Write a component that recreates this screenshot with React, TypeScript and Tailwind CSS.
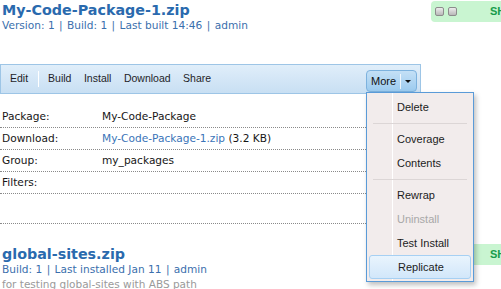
import React from "react";

const lucida = "font-['DejaVu_Sans',sans-serif]";
const helv = "font-['Liberation_Sans',Arial,sans-serif]";

type MenuEntry = { label: string; disabled?: boolean; active?: boolean } | "sep";

const menuItems: MenuEntry[] = [
  { label: "Delete" },
  "sep",
  { label: "Coverage" },
  { label: "Contents" },
  "sep",
  { label: "Rewrap" },
  { label: "Uninstall", disabled: true },
  { label: "Test Install" },
  { label: "Replicate", active: true },
];

const StatusBox = () => (
  <div className="ml-auto -mr-[12px] flex h-[21px] w-[82px] shrink-0 items-center rounded-[4px] bg-[#c9f5d1] pl-[4px]">
    <span className="h-[9px] w-[9px] rounded-[2px] border border-[#8c8c8c] bg-gradient-to-b from-[#ececec] to-[#b9b9b9]" />
    <span className="ml-[4px] h-[9px] w-[9px] rounded-[2px] border border-[#8c8c8c] bg-gradient-to-b from-[#ececec] to-[#b9b9b9]" />
    <span className={`${helv} ml-[33px] text-[11px] font-bold text-[#179c4c]`}>SH</span>
  </div>
);

const Sep = () => <span className="mx-[1px]">|</span>;

const MoreMenu = () => (
  <div className={`${helv} absolute left-0 top-full z-10 w-[108px] border border-[#5a9bd8] bg-[#f2ecec] pb-[2px] pt-[2px] text-[11px] shadow-[2px_3px_5px_rgba(0,0,0,0.25)]`}>
    <div className="absolute bottom-0 left-[25px] top-0 w-[1px] bg-white" />
    {menuItems.map((m, i) =>
      m === "sep" ? (
        <div key={i} className="relative flex h-[8px] items-center px-[6px]">
          <div className="h-[1px] w-full bg-[#dcd6d6]" />
        </div>
      ) : (
        <div
          key={i}
          className={
            "relative mx-[2px] flex h-[24px] items-center rounded-[3px] pl-[28px] " +
            (m.active
              ? "border border-[#a6d0f3] bg-gradient-to-b from-[#e9f4fd] to-[#d2e7fa] pl-[27px]"
              : "") +
            (m.disabled ? " text-[#a8a8a8]" : " text-[#1c1c1c]")
          }
        >
          {m.label}
        </div>
      )
    )}
  </div>
);

const Toolbar = () => (
  <div className={`${helv} mt-[32px] flex h-[30px] w-[421px] items-center border border-[#9dc5e6] bg-gradient-to-b from-[#e0eefa] to-[#c8dff3] pl-[9px] pr-[3px] text-[10.5px] text-[#1e1e28]`}>
    <span>Edit</span>
    <span className="ml-[10px] mr-[9px] h-[16px] w-[1px] bg-white" />
    <div className="flex gap-[12.5px]">
      <span>Build</span>
      <span>Install</span>
      <span>Download</span>
      <span>Share</span>
    </div>
    <div className="relative ml-auto mb-[1px] self-end">
      <div className="flex h-[22px] w-[51px] items-center rounded-[4px] border border-[#7db2de] bg-gradient-to-b from-[#c4e0f6] to-[#9ccbef] text-[11px] text-[#111]">
        <span className="pl-[4px]">More</span>
        <span className="ml-[4px] h-[15px] w-[1px] bg-white/80" />
        <span className="ml-[4px] h-0 w-0 border-l-[3px] border-r-[3px] border-t-[3px] border-l-transparent border-r-transparent border-t-[#111]" />
      </div>
      <MoreMenu />
    </div>
  </div>
);

const rows: { label: string; value: React.ReactNode }[] = [
  { label: "Package:", value: "My-Code-Package" },
  {
    label: "Download:",
    value: (
      <>
        <span className="text-[#3a74b8]">My-Code-Package-1.zip</span> (3.2 KB)
      </>
    ),
  },
  { label: "Group:", value: "my_packages" },
  { label: "Filters:", value: "" },
];

export default function App() {
  return (
    <div className={`${lucida} relative h-[289px] w-[501px] overflow-hidden bg-white`}>
      <div className="w-[472px] border-b border-dotted border-[#8a8a8a] pb-[29px] pt-[1px]">
        <div className="flex w-[501px] items-start">
          <div className="pl-[2px] pt-[1px]">
            <div className="text-[14.3px] font-bold leading-[17px] text-[#2a6aae]">My-Code-Package-1.zip</div>
            <div className="text-[10.6px] leading-[13px] text-[#3b6fad]">
              Version: 1 <Sep /> Build: 1 <Sep /> Last built 14:46 <Sep /> admin
            </div>
          </div>
          <StatusBox />
        </div>
        <Toolbar />
        <div className="mt-[12px] text-[10.6px] text-[#161616]">
          {rows.map((r) => (
            <div key={r.label} className="flex h-[22px] items-center border-b border-dotted border-[#8a8a8a] pl-[2px]">
              <span className="w-[100px]">{r.label}</span>
              <span>{r.value}</span>
            </div>
          ))}
        </div>
      </div>
      <div className="pt-[20px]">
        <div className="flex w-[501px] items-start">
          <div className="pl-[2px] pt-[2px]">
            <div className="text-[14.3px] font-bold leading-[17px] text-[#2a6aae]">global-sites.zip</div>
            <div className="text-[10.6px] leading-[13px] text-[#3b6fad]">
              Build: 1 <Sep /> Last installed Jan 11 <Sep /> admin
            </div>
            <div className="mt-[2px] text-[10.5px] leading-[13px] text-[#9a9a9a]">for testing global-sites with ABS path</div>
          </div>
          <StatusBox />
        </div>
      </div>
    </div>
  );
}
